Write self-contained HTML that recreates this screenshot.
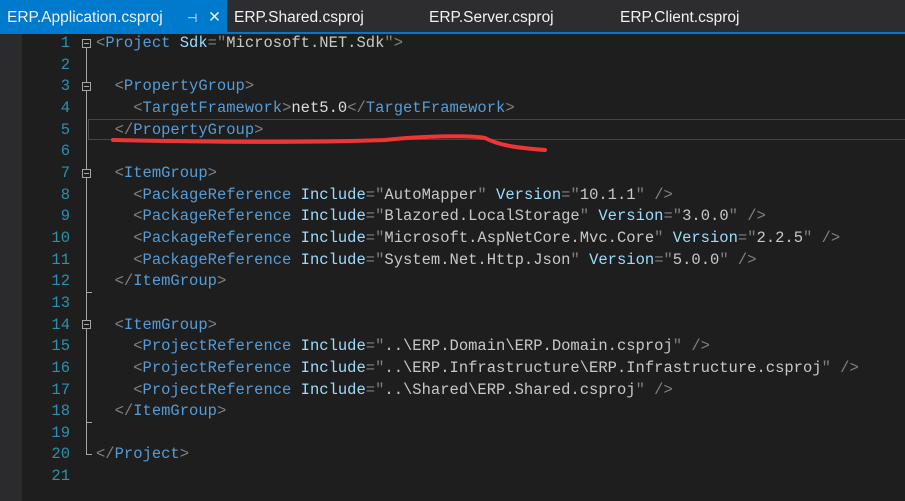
<!DOCTYPE html>
<html><head><meta charset="utf-8"><style>
html,body{margin:0;padding:0;width:905px;height:501px;overflow:hidden;background:#1e1e1e;}
.tabs{position:absolute;left:0;top:0;width:905px;height:32px;background:#2d2d30;font-family:"Liberation Sans",sans-serif;font-size:15.5px;color:#f1f1f1;}
.tab{position:absolute;top:0;height:32px;line-height:36px;}
.active{left:0;width:227px;background:#007acc;}
.bar{position:absolute;left:0;top:32px;width:905px;height:2px;background:#007acc;}
.left{position:absolute;left:0;top:34px;width:22px;height:467px;background:#2b2b2e;}
.code{position:absolute;left:0;top:33px;font-family:"Liberation Mono",monospace;font-size:15.5px;line-height:21.65px;white-space:pre;color:#dcdcdc;}
.ln{position:absolute;left:22px;top:0;width:48px;text-align:right;color:#2b91af;}
.tx{position:absolute;left:96px;top:0;}
.b{color:#808080}.t{color:#569cd6}.a{color:#9cdcfe}.v{color:#c8c8c8}
.cur{position:absolute;left:88px;top:119px;width:830px;height:21px;border:1px solid #464646;box-sizing:border-box;}
.fold{position:absolute;width:9px;height:9px;border:1px solid #a5a5a5;box-sizing:border-box;left:82px;background:#1e1e1e;}
.fold:after{content:"";position:absolute;left:1px;top:3px;width:5px;height:1px;background:#a5a5a5;}
.vl{position:absolute;left:86px;width:1px;background:#a5a5a5;}
.tk{position:absolute;left:86px;width:6px;height:1px;background:#a5a5a5;}
</style></head><body>
<div class="tabs">
<div class="tab active"><span style="position:absolute;left:7px">ERP.Application.csproj</span><span style="position:absolute;left:187px;font-size:12px">⊣</span><span style="position:absolute;left:208px">✕</span></div>
<div class="tab" style="left:234px">ERP.Shared.csproj</div>
<div class="tab" style="left:429px">ERP.Server.csproj</div>
<div class="tab" style="left:620px">ERP.Client.csproj</div>
</div>
<div class="bar"></div>
<div class="left"></div>
<div class="cur"></div>
<div class="vl" style="top:48px;height:406px"></div>
<div class="tk" style="top:454px"></div>
<div class="tk" style="top:292px"></div>
<div class="tk" style="top:422px"></div>
<div class="fold" style="top:39px"></div>
<div class="fold" style="top:82px"></div>
<div class="fold" style="top:169px"></div>
<div class="fold" style="top:320px"></div>
<div class="code"><div class="ln">1
2
3
4
5
6
7
8
9
10
11
12
13
14
15
16
17
18
19
20
21</div><div class="tx"><span class="b">&lt;</span><span class="t">Project</span> <span class="a">Sdk</span><span class="b">="</span><span class="v">Microsoft.NET.Sdk</span><span class="b">"&gt;</span>

  <span class="b">&lt;</span><span class="t">PropertyGroup</span><span class="b">&gt;</span>
    <span class="b">&lt;</span><span class="t">TargetFramework</span><span class="b">&gt;</span>net5.0<span class="b">&lt;/</span><span class="t">TargetFramework</span><span class="b">&gt;</span>
  <span class="b">&lt;/</span><span class="t">PropertyGroup</span><span class="b">&gt;</span>

  <span class="b">&lt;</span><span class="t">ItemGroup</span><span class="b">&gt;</span>
    <span class="b">&lt;</span><span class="t">PackageReference</span> <span class="a">Include</span><span class="b">="</span><span class="v">AutoMapper</span><span class="b">"</span> <span class="a">Version</span><span class="b">="</span><span class="v">10.1.1</span><span class="b">" /&gt;</span>
    <span class="b">&lt;</span><span class="t">PackageReference</span> <span class="a">Include</span><span class="b">="</span><span class="v">Blazored.LocalStorage</span><span class="b">"</span> <span class="a">Version</span><span class="b">="</span><span class="v">3.0.0</span><span class="b">" /&gt;</span>
    <span class="b">&lt;</span><span class="t">PackageReference</span> <span class="a">Include</span><span class="b">="</span><span class="v">Microsoft.AspNetCore.Mvc.Core</span><span class="b">"</span> <span class="a">Version</span><span class="b">="</span><span class="v">2.2.5</span><span class="b">" /&gt;</span>
    <span class="b">&lt;</span><span class="t">PackageReference</span> <span class="a">Include</span><span class="b">="</span><span class="v">System.Net.Http.Json</span><span class="b">"</span> <span class="a">Version</span><span class="b">="</span><span class="v">5.0.0</span><span class="b">" /&gt;</span>
  <span class="b">&lt;/</span><span class="t">ItemGroup</span><span class="b">&gt;</span>

  <span class="b">&lt;</span><span class="t">ItemGroup</span><span class="b">&gt;</span>
    <span class="b">&lt;</span><span class="t">ProjectReference</span> <span class="a">Include</span><span class="b">="</span><span class="v">..\ERP.Domain\ERP.Domain.csproj</span><span class="b">" /&gt;</span>
    <span class="b">&lt;</span><span class="t">ProjectReference</span> <span class="a">Include</span><span class="b">="</span><span class="v">..\ERP.Infrastructure\ERP.Infrastructure.csproj</span><span class="b">" /&gt;</span>
    <span class="b">&lt;</span><span class="t">ProjectReference</span> <span class="a">Include</span><span class="b">="</span><span class="v">..\Shared\ERP.Shared.csproj</span><span class="b">" /&gt;</span>
  <span class="b">&lt;/</span><span class="t">ItemGroup</span><span class="b">&gt;</span>

<span class="b">&lt;/</span><span class="t">Project</span><span class="b">&gt;</span></div></div>
<svg style="position:absolute;left:0;top:0" width="905" height="501"><path d="M113 140 C200 142 300 143 385 140 C420 136 470 135 485 138 C500 146 520 148 545 150" stroke="#f03535" stroke-width="4" fill="none" stroke-linecap="round"/></svg>
</body></html>
